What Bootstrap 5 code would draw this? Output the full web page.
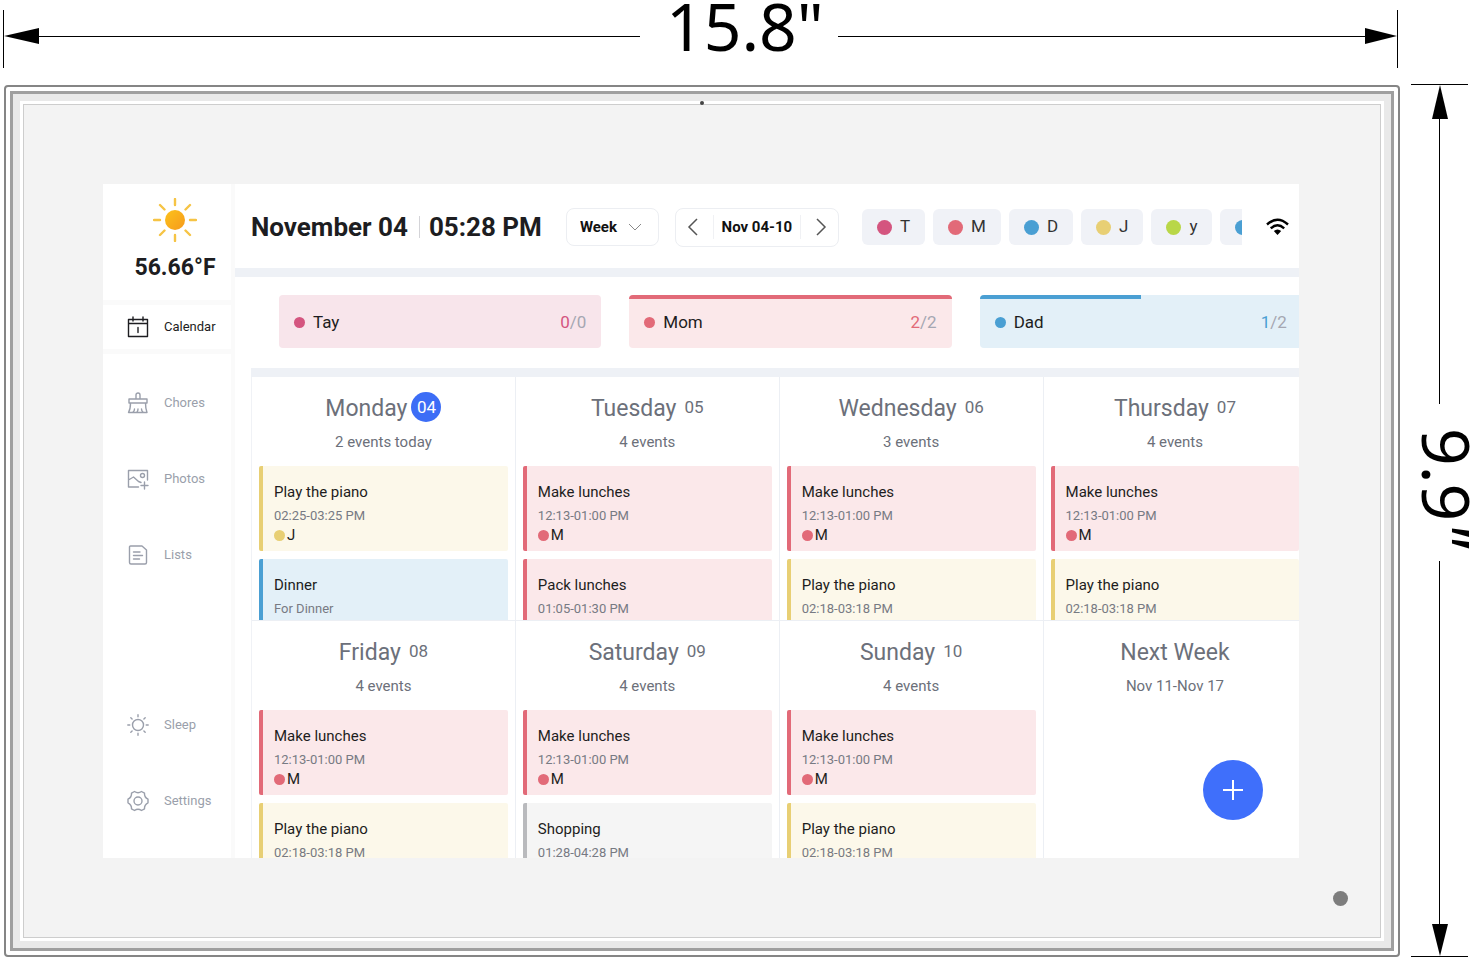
<!DOCTYPE html>
<html lang="en">
<head>
<meta charset="utf-8">
<meta name="viewport" content="width=device-width, initial-scale=1">
<title>Family calendar display</title>
<link href="https://cdn.jsdelivr.net/npm/bootstrap@5.3.0/dist/css/bootstrap.min.css" rel="stylesheet">
<style>
:root{--rose:#d4557f;--rose-bg:#f8e5eb;--red:#e26a78;--red-bg:#fbe8ea;--blue:#4a9fd3;--blue-bg:#e3f0f8;--yellow:#e8cf74;--yellow-bg:#fcf8ea;--lime:#b9d748;--grey:#b9babd;--grey-bg:#f5f5f5;--strip:#eef1f6;--ink:#1d1d21}
body{font-family:Roboto,"Liberation Sans",sans-serif;color:var(--ink);background:#fff}
.page{min-height:100vh;padding:0 7px 3px 4px}
/* dimension rulers */
.ruler-x{height:84px;margin-right:70px;margin-left:-1px}
.ruler-x .arm{height:58px;margin-top:10px;padding-bottom:6px}
.arm-l{flex:639 1 0;border-left:1px solid #000}
.arm-r{flex:562 1 0;border-right:1px solid #000}
.rule-h{height:1px;background:#000;flex:1}
.rule-v{width:1px;background:#000;flex:1}
.dim-text{font-family:"Noto Sans",sans-serif;color:#000;font-size:66px;line-height:50px}
.dim-x{padding:0 14px 0 26px}
.ruler-y{width:57px;margin-left:11px}
.dim-y{writing-mode:vertical-rl;line-height:54px;padding:24px 0 14px;margin:0 -7px 0 10px}
.arm-t{flex:320 1 0;border-top:1px solid #000}
.arm-b{flex:397 1 0;border-bottom:1px solid #000}
.ruler-x svg,.ruler-y svg{display:block;flex:none}
/* device body */
.device{border:2px solid #858585;border-radius:4px;padding:4px;background:#fff;margin-top:1px;min-width:0}
.frame{border:3px solid #9f9f9f;padding:7px;background:#e9e9e9;min-width:0}
.glass-edge{border:3px solid #fff;min-width:0}
.glass{border:1px solid #cdcdcd;background:#f3f3f3;padding:79px 81px 79px 79px;position:relative;min-width:0}
.camera{width:4px;height:4px;background:#444;top:-4px;left:50%;transform:translateX(-50%)}
.home-key{width:15px;height:15px;background:#7d7d7d;right:32px;bottom:31px}
.screen{background:#fff;position:relative;overflow:hidden;flex:1 1 0;min-width:0}
/* sidebar */
.side{width:132px;border-right:4px solid #fafafa;padding-bottom:35px}
.weather{height:116px;padding:14px 0 0 16px}
.temp{font-size:23px;line-height:28px;font-weight:700;margin-top:12px}
.side .nav-link{height:44px;padding:0 0 0 24px;gap:15px;font-size:13px;color:#9a9fab}
.side .nav-link.active{color:var(--ink);box-shadow:0 -5px 0 #fafafa,0 5px 0 #fafafa}
.side .nav{gap:32px;padding-top:5px}
.side svg{width:22px;height:22px;fill:none;stroke:currentColor;stroke-width:1.4;stroke-linecap:round;stroke-linejoin:round}
.side .sun{width:44px;height:44px;stroke:none}
/* header */
.topbar{height:84px;padding:2px 10px 0 16px}
.now{font-size:26px;font-weight:700;line-height:32px;white-space:nowrap}
.now span{background:linear-gradient(#d4d4d8,#d4d4d8) no-repeat left center/1px 22px;margin-left:11px;padding-left:10px}
.topbar .form-select{width:93px;height:38px;padding:0 0 0 13px;border:1px solid #eceef2;border-radius:8px;font-size:15px;font-weight:700;color:#111;margin-left:24px;flex:none;background:#fff url("data:image/svg+xml,%3Csvg xmlns='http://www.w3.org/2000/svg' viewBox='0 0 14 8'%3E%3Cpath d='M1 1l6 6 6-6' fill='none' stroke='%23888'/%3E%3C/svg%3E") no-repeat right 16px center/14px 8px}
.range{width:164px;height:39px;border:1px solid #eceef2;border-radius:8px;margin-left:16px;font-size:15px;font-weight:700;color:#111}
.range .btn{width:37px;height:24px;padding:0 3px 0 0;border:0;display:flex;align-items:center;justify-content:center}
.range .btn:last-child{padding:0 0 0 5px}
.range .when{border:solid #f0f1f4;border-width:0 1px;line-height:24px}
.chips{flex:1 1 0;min-width:0;overflow:hidden;gap:8px;margin:0 24px 0 23px}
.chip{height:36px;padding:0 15px;gap:8px;border:0;border-radius:6px;background:#f0f2f7;font-size:17px;color:#333;flex:none}
.dot{display:inline-block;border-radius:50%;background:var(--c);width:11px;height:11px;flex:none}
.chip .dot{width:15px;height:15px}
.strip{height:9px;background:var(--strip)}
/* chore progress */
.people{height:91px;padding:18px 0 0 28px;gap:28px;overflow:hidden}
.person{flex:0 0 31.6%;height:53px;border-radius:4px;background:var(--b);padding:2px 15px 0;font-size:17px;position:relative;overflow:hidden}
.person .bar{position:absolute;left:0;top:0;height:4px;background:var(--c)}
.person .name{margin-left:8px;flex:1}
.person .count{color:#a5a7b2}
.person b{font-weight:400;color:var(--c)}
/* week grid */
.lower{margin-left:16px;flex:1 1 0;min-height:0;overflow:hidden}
.week{display:grid;grid-template-columns:repeat(4,25.2%);grid-auto-rows:244px;flex:1 1 0;min-height:0;overflow:hidden;border-left:1px solid #f0f2f6}
.day{border:solid #eceff4;border-width:0 1px 1px 0;padding:0 7px;overflow:hidden}
.day header{height:89px;padding-top:17px;text-align:center;color:#6c707a}
.day h2{font-size:23px;line-height:30px;font-weight:400;margin:0;gap:8px}
.day h2 small{font-size:17px;line-height:26px}
.day h2.today{gap:4px}
.day .today small{width:30px;height:30px;border-radius:50%;background:#3c6df6;color:#fff;line-height:30px;margin-top:-2px}
.day header p{font-size:15px;line-height:20px;margin:8px 0 0}
.event{background:var(--b);border-left:4px solid var(--c);border-radius:2px;padding:16px 0 6px 11px;margin-bottom:8px;font-size:15px;line-height:20px}
.event time,.event .note{display:block;font-size:13px;margin-top:4px;margin-bottom:-1px;color:#777a83}
.event .who{gap:2px;display:flex;align-items:center}
.c-rose{--c:var(--rose);--b:var(--rose-bg)}.c-red{--c:var(--red);--b:var(--red-bg)}.c-blue{--c:var(--blue);--b:var(--blue-bg)}.c-yellow{--c:var(--yellow);--b:var(--yellow-bg)}.c-lime{--c:var(--lime)}.c-grey{--c:var(--grey);--b:var(--grey-bg)}
.fab{right:36px;bottom:38px;width:60px;height:60px;background:#3f6ffb;border:0}
</style>
</head>
<body>
<div class="page d-flex flex-column">
  <div class="ruler-x d-flex">
    <div class="arm arm-l d-flex align-items-center"><svg width="35" height="16"><path d="M0 8L35 0V16Z"/></svg><div class="rule-h"></div></div>
    <div class="dim-text dim-x">15.8"</div>
    <div class="arm arm-r d-flex align-items-center"><div class="rule-h"></div><svg width="32" height="16"><path d="M32 8L0 0V16Z"/></svg></div>
  </div>
  <div class="d-flex flex-grow-1">
    <div class="device d-flex flex-grow-1">
      <div class="frame d-flex flex-grow-1">
        <div class="glass-edge d-flex flex-grow-1">
          <div class="glass d-flex flex-grow-1">
            <i class="camera position-absolute rounded-circle"></i>
            <i class="home-key position-absolute rounded-circle"></i>
            <div class="screen d-flex">
              <aside class="side d-flex flex-column flex-shrink-0">
                <div class="weather text-center">
                  <svg viewBox="0 0 44 44" class="sun d-block mx-auto"><defs><linearGradient id="sun" x2="1" y2="1"><stop stop-color="#fcc21c"/><stop offset="1" stop-color="#f69a1c"/></linearGradient></defs><circle cx="22" cy="22" r="10" fill="url(#sun)"/><path d="M22 1v6M22 37v6M1 22h6M37 22h6M7 7l4.500 4.500M32.500 32.500l4.500 4.500M37 7l-4.500 4.500M11.500 32.500L7 37" stroke="#f6c445" stroke-width="2.400"/></svg>
                  <div class="temp">56.66°F</div>
                </div>
                <nav class="nav flex-column flex-nowrap flex-grow-1">
                  <a href="#" class="nav-link active d-flex align-items-center" aria-current="page"><svg viewBox="0 0 22 22"><path d="M1.500 3.500h19v17h-19zM1.500 7.500h19M6 1v4M16 1v4M11 11.500v5"/></svg>Calendar</a>
                  <a href="#" class="nav-link d-flex align-items-center"><svg viewBox="0 0 22 22"><path d="M9 7V3a2 2 0 0 1 4 0v4M2 7h18v4H2zM3.500 11C3.500 15 3 18 1.500 20.500H20C19 18 18.500 15 18.500 11M6 20q1.500-1 1.500-3M10 20q1-1 1-3M14.500 17q0 2 1.500 3"/></svg>Chores</a>
                  <a href="#" class="nav-link d-flex align-items-center"><svg viewBox="0 0 22 22"><path d="M11.500 19H1.500V2.500h19V12M1.500 12l5-3 5 4.500 2.500 1M17.500 14v7M14 17.500h7"/><circle cx="15.500" cy="7.500" r="2"/></svg>Photos</a>
                  <a href="#" class="nav-link d-flex align-items-center"><svg viewBox="0 0 22 22"><path d="M3.500 2H15l4.500 4v12.500a1.500 1.500 0 0 1-1.500 1.500H4a1.500 1.500 0 0 1-1.500-1.500V3a1 1 0 0 1 1-1zM6.500 8H13M6.500 11.500h9M6.500 15h6"/></svg>Lists</a>
                  <a href="#" class="nav-link d-flex align-items-center mt-auto"><svg viewBox="0 0 22 22"><circle cx="11" cy="11" r="5.500"/><path d="M11 .8v2M11 19.200v2M.8 11h2M19.200 11h2M3.800 3.800l1.300 1.300M16.900 16.900l1.300 1.300M18.200 3.800l-1.300 1.300M5.100 16.900l-1.300 1.300"/></svg>Sleep</a>
                  <a href="#" class="nav-link d-flex align-items-center"><svg viewBox="0 0 22 22"><path d="M7.500 1.500Q11 4 14.500 1.500L17.500 3.200Q17.200 7.200 21 9.200V12.800Q17.200 14.800 17.500 18.800L14.500 20.500Q11 18 7.500 20.500L4.500 18.800Q4.800 14.800 1 12.800V9.200Q4.800 7.200 4.500 3.200Z"/><circle cx="11" cy="11" r="4"/></svg>Settings</a>
                </nav>
              </aside>
              <main class="d-flex flex-column flex-grow-1 overflow-hidden">
                <div class="topbar d-flex align-items-center">
                  <div class="now">November 04<span>05:28 PM</span></div>
                  <select class="form-select" aria-label="View"><option>Week</option><option>Day</option><option>Month</option></select>
                  <div class="range d-flex align-items-center flex-shrink-0">
                    <button class="btn" aria-label="Previous week"><svg width="11" height="18" fill="none" stroke="#555" stroke-width="1.500"><path d="M10 1L2 9l8 8"/></svg></button>
                    <span class="when flex-grow-1 text-center">Nov 04-10</span>
                    <button class="btn" aria-label="Next week"><svg width="11" height="18" fill="none" stroke="#555" stroke-width="1.500"><path d="M1 1l8 8-8 8"/></svg></button>
                  </div>
                  <div class="chips d-flex">
                    <button class="chip d-flex align-items-center c-rose"><i class="dot"></i>T</button>
                    <button class="chip d-flex align-items-center c-red"><i class="dot"></i>M</button>
                    <button class="chip d-flex align-items-center c-blue"><i class="dot"></i>D</button>
                    <button class="chip d-flex align-items-center c-yellow"><i class="dot"></i>J</button>
                    <button class="chip d-flex align-items-center c-lime"><i class="dot"></i>y</button>
                    <button class="chip d-flex align-items-center c-blue" aria-label="More people"><i class="dot"></i></button>
                  </div>
                  <svg class="flex-shrink-0" width="23" height="18" viewBox="0 0 23 18" fill="none" stroke="#000" stroke-width="2.400"><path d="M1 6.500Q11.500-3 22 6.500M4.800 10.300Q11.500 4.300 18.200 10.300"/><path d="M11.500 17L7.800 13q3.700-3 7.400 0z" fill="#000" stroke="none"/></svg>
                </div>
                <div class="strip flex-shrink-0"></div>
                <div class="lower d-flex flex-column">
                  <div class="people d-flex flex-shrink-0">
                    <div class="person c-rose d-flex align-items-center"><i class="dot"></i><span class="name">Tay</span><span class="count"><b>0</b>/0</span></div>
                    <div class="person c-red d-flex align-items-center"><i class="bar" style="width:100%"></i><i class="dot"></i><span class="name">Mom</span><span class="count"><b>2</b>/2</span></div>
                    <div class="person c-blue d-flex align-items-center"><i class="bar" style="width:50%"></i><i class="dot"></i><span class="name">Dad</span><span class="count"><b>1</b>/2</span></div>
                  </div>
                  <div class="strip flex-shrink-0"></div>
                  <div class="week">
                    <section class="day"><header><h2 class="today d-flex justify-content-center">Monday<small>04</small></h2><p>2 events today</p></header>
                      <div class="event c-yellow">Play the piano<time>02:25-03:25 PM</time><span class="who"><i class="dot"></i>J</span></div>
                      <div class="event c-blue">Dinner<span class="note">For Dinner</span></div></section>
                    <section class="day"><header><h2 class="d-flex justify-content-center">Tuesday<small>05</small></h2><p>4 events</p></header>
                      <div class="event c-red">Make lunches<time>12:13-01:00 PM</time><span class="who"><i class="dot"></i>M</span></div>
                      <div class="event c-red">Pack lunches<time>01:05-01:30 PM</time></div></section>
                    <section class="day"><header><h2 class="d-flex justify-content-center">Wednesday<small>06</small></h2><p>3 events</p></header>
                      <div class="event c-red">Make lunches<time>12:13-01:00 PM</time><span class="who"><i class="dot"></i>M</span></div>
                      <div class="event c-yellow">Play the piano<time>02:18-03:18 PM</time></div></section>
                    <section class="day"><header><h2 class="d-flex justify-content-center">Thursday<small>07</small></h2><p>4 events</p></header>
                      <div class="event c-red">Make lunches<time>12:13-01:00 PM</time><span class="who"><i class="dot"></i>M</span></div>
                      <div class="event c-yellow">Play the piano<time>02:18-03:18 PM</time></div></section>
                    <section class="day"><header><h2 class="d-flex justify-content-center">Friday<small>08</small></h2><p>4 events</p></header>
                      <div class="event c-red">Make lunches<time>12:13-01:00 PM</time><span class="who"><i class="dot"></i>M</span></div>
                      <div class="event c-yellow">Play the piano<time>02:18-03:18 PM</time></div></section>
                    <section class="day"><header><h2 class="d-flex justify-content-center">Saturday<small>09</small></h2><p>4 events</p></header>
                      <div class="event c-red">Make lunches<time>12:13-01:00 PM</time><span class="who"><i class="dot"></i>M</span></div>
                      <div class="event c-grey">Shopping<time>01:28-04:28 PM</time></div></section>
                    <section class="day"><header><h2 class="d-flex justify-content-center">Sunday<small>10</small></h2><p>4 events</p></header>
                      <div class="event c-red">Make lunches<time>12:13-01:00 PM</time><span class="who"><i class="dot"></i>M</span></div>
                      <div class="event c-yellow">Play the piano<time>02:18-03:18 PM</time></div></section>
                    <section class="day"><header><h2>Next Week</h2><p>Nov 11-Nov 17</p></header></section>
                  </div>
                </div>
              </main>
              <button class="fab position-absolute rounded-circle d-flex align-items-center justify-content-center" aria-label="Add event"><svg width="22" height="22" stroke="#fff" stroke-width="2"><path d="M11 1v20M1 11h20"/></svg></button>
            </div>
          </div>
        </div>
      </div>
    </div>
    <div class="ruler-y d-flex flex-column align-items-stretch flex-shrink-0">
      <div class="arm-t d-flex flex-column align-items-center"><svg width="16" height="34"><path d="M8 0L0 34H16Z"/></svg><div class="rule-v"></div></div>
      <div class="dim-text dim-y">9.9<i>"</i></div>
      <div class="arm-b d-flex flex-column align-items-center"><div class="rule-v"></div><svg width="16" height="32"><path d="M8 32L0 0H16Z"/></svg></div>
    </div>
  </div>
</div>
<script src="https://cdn.jsdelivr.net/npm/bootstrap@5.3.0/dist/js/bootstrap.bundle.min.js"></script>
</body>
</html>
